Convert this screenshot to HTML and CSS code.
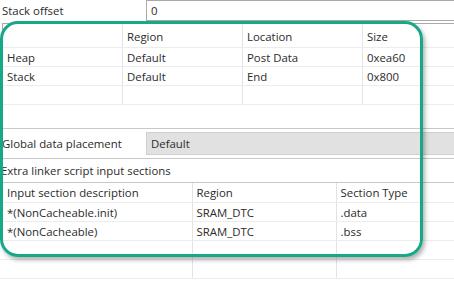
FILE: index.html
```html
<!DOCTYPE html>
<html lang="en">
<head>
    <meta charset="UTF-8">
    <title>Memory placement</title>
    <link rel="stylesheet" href="styles.css">
</head>
<body>
    <div class="page">
        <div class="field-row">
            <span class="field-label">Stack offset</span>
            <div class="field-input">0</div>
        </div>

        <table class="grid grid-top">
            <colgroup>
                <col class="c120"><col class="c120"><col class="c120"><col>
            </colgroup>
            <tr class="head"><td></td><td>Region</td><td>Location</td><td>Size</td></tr>
            <tr><td>Heap</td><td>Default</td><td>Post Data</td><td>0xea60</td></tr>
            <tr><td>Stack</td><td>Default</td><td>End</td><td>0x800</td></tr>
            <tr><td></td><td></td><td></td><td></td></tr>
        </table>

        <div class="spacer"></div>

        <div class="field-row placement">
            <span class="field-label">Global data placement</span>
            <div class="field-input disabled">Default</div>
        </div>

        <div class="section-title">Extra linker script input sections</div>

        <table class="grid grid-bottom">
            <colgroup>
                <col class="c192"><col class="c144"><col>
            </colgroup>
            <tr class="head"><td>Input section description</td><td>Region</td><td>Section Type</td></tr>
            <tr><td>*(NonCacheable.init)</td><td>SRAM_DTC</td><td>.data</td></tr>
            <tr><td>*(NonCacheable)</td><td>SRAM_DTC</td><td>.bss</td></tr>
            <tr><td></td><td></td><td></td></tr>
            <tr><td></td><td></td><td></td></tr>
        </table>

        <!-- callout frame drawn over the tables -->
        <div class="highlight-frame"></div>
    </div>
</body>
</html>
```

FILE: styles.css
```css
body {
    margin: 0;
    background-color: #fff;
    font-family: 'Open Sans', 'Noto Sans', sans-serif;
    font-size: 11.4px;
    color: #2b2b2b;
}

.page {
    position: relative;
    width: 454px;
    height: 281px;
    overflow: hidden;
}

.field-row {
    display: flex;
    align-items: center;
    height: 21px;
}

.field-label {
    width: 144px;
    padding-left: 2px;
}

.field-input {
    flex: 1;
    height: 19px;
    line-height: 19px;
    padding-left: 4px;
    border: 1px solid #a9a9a9;
    border-right: none;
    margin-top: -1px;
}

.grid {
    border-collapse: collapse;
    table-layout: fixed;
    width: 452px;
    margin-left: 2px;
}

.grid td {
    height: 18px;
    padding: 0 0 0 4px;
    border-bottom: 1px solid #ececec;
    border-left: 1px solid #e2e2e8;
    white-space: nowrap;
    overflow: hidden;
}

.grid td:first-child {
    border-left: 1px solid #a9a9a9;
}

.grid-top {
    margin-top: 2px;
    border-top: 1px solid #a9a9a9;
}

.grid-top .head td {
    height: 22px;
    padding-top: 1px;
}

.c120 { width: 120px; }
.c192 { width: 192px; }
.c144 { width: 144px; }

.spacer {
    height: 23px;
    border-bottom: 1px solid #c8c8c8;
}

.placement {
    height: 29px;
    border-bottom: 1px solid #c8c8c8;
}

.placement .field-input {
    margin-top: -1px;
}

.field-input.disabled {
    height: 21px;
    line-height: 21px;
    background-color: #e1e1e1;
    border-color: #cfcfcf;
}

.section-title {
    height: 23px;
    line-height: 23px;
    padding-left: 1px;
    border-bottom: 1px solid #c8c8c8;
}

.grid-bottom {
    margin-left: 0;
    width: 454px;
}

.grid-bottom td:first-child {
    border-left: none;
    padding-left: 7px;
}

.grid-bottom .head td {
    height: 19px;
}

.highlight-frame {
    position: absolute;
    left: 0;
    top: 21px;
    width: 417px;
    height: 230px;
    border: 3px solid #17a987;
    border-radius: 18px;
    box-shadow: 2px 3px 4px rgba(0, 0, 0, 0.3);
}
```
